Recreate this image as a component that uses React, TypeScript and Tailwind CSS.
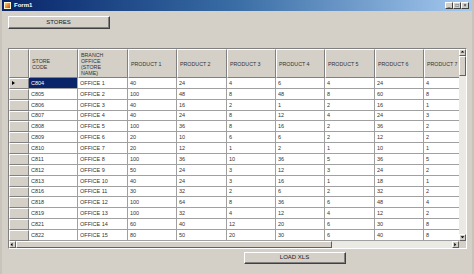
import React from 'react';

const rows: string[][] = [
  ['C804', 'OFFICE 1', '40', '24', '4', '6', '4', '24', '4'],
  ['C805', 'OFFICE 2', '100', '48', '8', '48', '8', '60', '8'],
  ['C806', 'OFFICE 3', '40', '16', '2', '1', '2', '16', '1'],
  ['C807', 'OFFICE 4', '40', '24', '8', '12', '4', '24', '3'],
  ['C808', 'OFFICE 5', '100', '36', '8', '16', '2', '36', '2'],
  ['C809', 'OFFICE 6', '20', '10', '6', '6', '2', '12', '2'],
  ['C810', 'OFFICE 7', '20', '12', '1', '2', '1', '10', '1'],
  ['C811', 'OFFICE 8', '100', '36', '10', '36', '5', '36', '5'],
  ['C812', 'OFFICE 9', '50', '24', '3', '12', '3', '24', '2'],
  ['C813', 'OFFICE 10', '40', '24', '3', '16', '1', '18', '1'],
  ['C816', 'OFFICE 11', '30', '32', '2', '6', '2', '32', '2'],
  ['C818', 'OFFICE 12', '100', '64', '8', '36', '6', '48', '4'],
  ['C819', 'OFFICE 13', '100', '32', '4', '12', '4', '12', '2'],
  ['C821', 'OFFICE 14', '60', '40', '12', '20', '6', '30', '8'],
  ['C822', 'OFFICE 15', '80', '50', '20', '30', '6', '40', '8'],
];

// column widths after the row header
const widths = ['w-[49px]', 'w-[50px]', 'w-[49px]', 'w-[50px]', 'w-[49px]', 'w-[49px]', 'w-[50px]', 'w-[49px]', 'w-[49px]'];

const headers: string[][] = [
  ['STORE', 'CODE'],
  ['BRANCH', 'OFFICE', '(STORE', 'NAME)'],
  ['PRODUCT 1'],
  ['PRODUCT 2'],
  ['PRODUCT 3'],
  ['PRODUCT 4'],
  ['PRODUCT 5'],
  ['PRODUCT 6'],
  ['PRODUCT 7'],
];

const Button = ({ label, className }: { label: string; className: string }) => (
  <div
    className={`${className} flex items-center justify-center border border-t-white border-l-white border-r-[#404040] border-b-[#404040] bg-[#d4d0c8] text-[6px] text-[#222]`}
  >
    <div className="w-full h-full flex items-center justify-center border-r border-b border-[#808080]">{label}</div>
  </div>
);

const Arrow = ({ dir }: { dir: 'up' | 'down' | 'left' | 'right' }) => {
  const pts = {
    up: '1,4 4,1 7,4',
    down: '1,2 4,5 7,2',
    left: '4,1 1,4 4,7',
    right: '2,1 5,4 2,7',
  }[dir];
  return (
    <div className="w-[7px] h-[7px] flex items-center justify-center bg-[#d4d0c8] border border-t-white border-l-white border-r-[#606060] border-b-[#606060]">
      <svg width="5" height="5" viewBox="0 0 8 8">
        <polygon points={pts} fill="#000" />
      </svg>
    </div>
  );
};

export default function App() {
  return (
    <div
      className="w-[474px] h-[274px] bg-[#d4d0c8] flex flex-col border-l-2 border-r-2 border-[#c8c4bc] overflow-hidden"
      style={{ fontFamily: '"Liberation Sans", Arial, sans-serif' }}
    >
      {/* title bar */}
      <div className="h-[11px] shrink-0 flex items-center bg-gradient-to-r from-[#0a246a] via-[#3a6ea5] to-[#a6caf0] pl-[2px] pr-[3px]">
        <div className="w-[7px] h-[7px] bg-gradient-to-br from-[#f8d060] to-[#d04020] border border-[#fff8d0]" />
        <span className="ml-[3px] text-[6px] font-bold text-white">Form1</span>
        <div className="ml-auto flex gap-0">
          {['_', '□', '×'].map((c) => (
            <div
              key={c}
              className="w-[8px] h-[7px] bg-[#d4d0c8] border border-t-white border-l-white border-r-[#404040] border-b-[#404040] flex items-center justify-center text-[5px] leading-none text-black"
            >
              {c}
            </div>
          ))}
        </div>
      </div>

      <div className="flex-1 flex flex-col pl-[6px] pr-[4px]">
        <Button label="STORES" className="mt-[5px] w-[102px] h-[13px]" />

        {/* data grid */}
        <div className="mt-[19px] w-[459px] h-[201px] flex flex-col border border-t-[#808080] border-l-[#808080] border-r-white border-b-white bg-[#808080]">
          <div className="flex-1 flex min-h-0">
            <div className="w-[450px] flex flex-col overflow-hidden">
              {/* header row */}
              <div className="flex h-[29px] shrink-0">
                <div className="w-[20px] shrink-0 bg-[#d4d0c8] border-r border-b border-[#808080] border-t border-t-white border-l border-l-white" />
                {headers.map((h, i) => (
                  <div
                    key={i}
                    className={`${widths[i]} shrink-0 bg-[#d4d0c8] border-r border-b border-[#808080] border-t border-t-white border-l border-l-white flex flex-col justify-center pl-[2px] text-[5.3px] leading-[6px] text-[#333]`}
                  >
                    {h.map((l) => (
                      <span key={l} className="whitespace-nowrap">{l}</span>
                    ))}
                  </div>
                ))}
              </div>
              {/* body rows */}
              {rows.map((r, ri) => (
                <div key={ri} className="flex h-[10.87px] shrink-0">
                  <div className="w-[20px] shrink-0 bg-[#d4d0c8] border-r border-b border-[#808080] border-t border-t-white border-l border-l-white flex items-center pl-[2px]">
                    {ri === 0 && (
                      <svg width="3" height="4" viewBox="0 0 3 4">
                        <polygon points="0,0 3,2 0,4" fill="#000" />
                      </svg>
                    )}
                  </div>
                  {r.map((c, ci) => (
                    <div
                      key={ci}
                      className={`${widths[ci]} shrink-0 border-r border-b border-[#a0a0a0] flex items-center pl-[2px] text-[5.5px] whitespace-nowrap ${
                        ri === 0 && ci === 0 ? 'bg-[#0a246a] text-white' : 'bg-white text-[#333]'
                      }`}
                    >
                      {c}
                    </div>
                  ))}
                </div>
              ))}
            </div>
            {/* vertical scrollbar */}
            <div className="w-[7px] shrink-0 flex flex-col bg-[#ebe9e4]">
              <Arrow dir="up" />
              <div className="h-[20px] bg-[#d4d0c8] border border-t-white border-l-white border-r-[#606060] border-b-[#606060]" />
              <div className="flex-1" />
              <Arrow dir="down" />
            </div>
          </div>
          {/* horizontal scrollbar */}
          <div className="h-[7px] shrink-0 flex bg-[#ebe9e4]">
            <Arrow dir="left" />
            <div className="w-[316px] bg-[#d4d0c8] border border-t-white border-l-white border-r-[#606060] border-b-[#606060]" />
            <div className="flex-1" />
            <Arrow dir="right" />
            <div className="w-[7px] bg-[#d4d0c8]" />
          </div>
        </div>

        <Button label="LOAD XLS" className="mt-[3px] ml-[236px] w-[102px] h-[12px]" />
      </div>
    </div>
  );
}
